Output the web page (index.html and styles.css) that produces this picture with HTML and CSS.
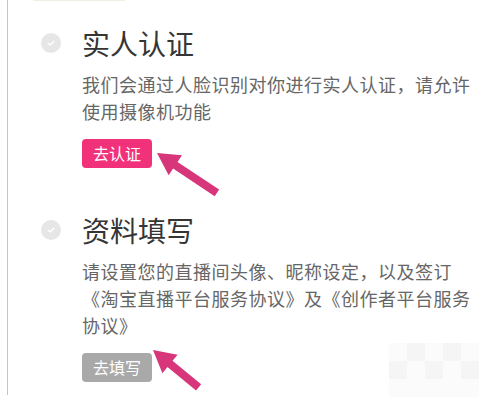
FILE: index.html
```html
<!DOCTYPE html>
<html>
<head lang="zh">
    <meta charset="UTF-8">
    <title>认证步骤</title>
    <link rel="stylesheet" href="styles.css">
</head>
<body>
<div class="page">
    <div class="topline"></div>
    <div class="steps">
        <div class="step">
            <span class="dot">
                <svg width="20" height="20" viewBox="0 0 20 20"><path d="M7.2 10.2l2 1.9 3.7-3.8" fill="none" stroke="#fff" stroke-width="1.4" stroke-linecap="round" stroke-linejoin="round"/></svg>
            </span>
            <div class="body">
                <h2 class="title">实人认证</h2>
                <p class="desc">我们会通过人脸识别对你进行实人认证，请允许使用摄像机功能</p>
                <a class="btn pink">去认证</a>
            </div>
        </div>
        <div class="step">
            <span class="dot">
                <svg width="20" height="20" viewBox="0 0 20 20"><path d="M7.2 10.2l2 1.9 3.7-3.8" fill="none" stroke="#fff" stroke-width="1.4" stroke-linecap="round" stroke-linejoin="round"/></svg>
            </span>
            <div class="body">
                <h2 class="title">资料填写</h2>
                <p class="desc">请设置您的直播间头像、昵称设定，以及签订《淘宝直播平台服务协议》及《创作者平台服务协议》</p>
                <a class="btn gray">去填写</a>
            </div>
        </div>
    </div>

    <!-- 标注箭头 -->
    <svg class="marks" width="485" height="402" viewBox="0 0 485 402">
        <g fill="#d8367b">
            <polygon transform="translate(157,153) rotate(33.7)" points="0,0 22,-12 22,-4 72,-4 72,4 22,4 22,12"/>
            <polygon transform="translate(153,350) rotate(39.4)" points="0,0 22,-12 22,-4 59,-4 59,4 22,4 22,12"/>
        </g>
    </svg>

    <div class="blur">
        <span></span><span class="d"></span><span></span><span class="d"></span><span></span>
        <span class="d"></span><span></span><span class="d"></span><span></span><span class="d"></span>
        <span></span><span></span><span></span><span></span><span></span>
    </div>
</div>
</body>
</html>
```

FILE: styles.css
```css
*{padding: 0;margin: 0;box-sizing: border-box;}
body{background: #fff;font-family: "Noto Sans CJK SC", "Noto Sans", sans-serif;width: 485px;height: 402px;overflow: hidden;}
.page{position: relative;width: 485px;height: 402px;}
.topline{position: absolute;left: 33px;top: 0;width: 92px;height: 1px;background: #f1eee2;}
.steps{margin-left: 7px;height: 395px;border-left: 1px solid #c4c4c4;padding: 25px 0 0 33px;}
.step{display: flex;gap: 21px;margin-bottom: 44px;}
.dot{width: 20px;height: 20px;border-radius: 50%;background: #e6e6e6;margin-top: 8px;flex-shrink: 0;display: flex;}
.body{width: 400px;}
.title{font-size: 28px;line-height: 36px;font-weight: normal;color: #353535;}
.desc{margin-top: 10px;font-size: 18px;line-height: 27px;letter-spacing: 0.5px;color: #666;}
.btn{display: inline-block;margin-top: 14px;height: 29px;line-height: 29px;padding: 0 11px;border-radius: 4px;font-size: 16px;color: #fff;}
.pink{background: #f1317a;}
.gray{background: #a9a9a9;}
.marks{position: absolute;left: 0;top: 0;pointer-events: none;}
.blur{position: absolute;left: 389px;top: 343px;width: 90px;height: 54px;display: grid;grid-template-columns: repeat(5, 1fr);}
.blur span{background: #fbfbfb;}
.blur .d{background: #f5f5f5;}
```
